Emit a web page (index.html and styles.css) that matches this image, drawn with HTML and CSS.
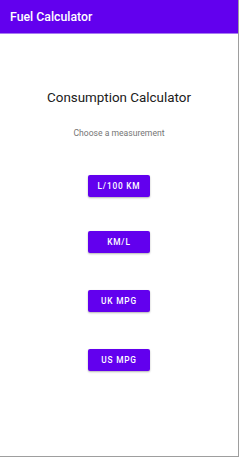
FILE: index.html
```html
<!DOCTYPE html>
<html>

<head>
    <title>Fuel Calculator</title>
    <link rel="stylesheet" href="styles.css">
</head>

<body>
    <div class="screen">
        <div class="app-bar">
            <span class="app-title">Fuel Calculator</span>
            <span class="status-edge"></span>
        </div>

        <div class="content">
            <h1 class="main-title">Consumption Calculator</h1>
            <p class="sub-title">Choose a measurement</p>

            <div class="btn-list">
                <div class="btn">L/100 km</div>
                <div class="btn btn-kml">km/l</div>
                <div class="btn btn-uk">UK mpg</div>
                <div class="btn btn-us">US mpg</div>
            </div>
        </div>
    </div>
</body>

</html>
```

FILE: styles.css
```css
body {
    margin: 0;
    font-family: Roboto, "Liberation Sans", sans-serif;
    background: white;
}

.screen {
    position: relative;
    box-sizing: border-box;
    width: 239px;
    height: 457px;
    border-right: 1px solid #9e9e9e;
    border-bottom: 1px solid #9e9e9e;
    overflow: hidden;
}

.app-bar {
    display: flex;
    align-items: center;
    height: 33px;
    padding-left: 10px;
    background-color: #6200ee;
    box-shadow: 0 1px 0 #a77bf0;
}

.app-title {
    color: white;
    font-size: 12.3px;
    font-weight: 500;
}

/* bout de barre de statut visible sur le bord droit */
.status-edge {
    position: absolute;
    top: 0;
    right: -1px;
    width: 1px;
    height: 13px;
    background-color: #3700b3;
}

.content {
    display: flex;
    flex-direction: column;
    align-items: center;
}

.main-title {
    margin: 56px 0 0 0;
    font-size: 13.4px;
    line-height: 17px;
    font-weight: 400;
    color: #202020;
}

.sub-title {
    margin: 21px 0 0 0;
    font-size: 8.6px;
    line-height: 12px;
    color: #757575;
}

.btn-list {
    display: flex;
    flex-direction: column;
    align-items: center;
    margin-top: 36px;
}

.btn {
    display: flex;
    align-items: center;
    justify-content: center;
    height: 22px;
    min-width: 62px;
    padding: 0 10px;
    box-sizing: border-box;
    border-radius: 2px;
    background-color: #6200ee;
    box-shadow: 0 1px 2px rgba(0, 0, 0, 0.3);
    color: white;
    font-size: 8.3px;
    font-weight: 500;
    letter-spacing: 0.8px;
    text-transform: uppercase;
}

.btn-kml {
    margin-top: 34px;
}

.btn-uk {
    margin-top: 37px;
}

.btn-us {
    margin-top: 37px;
}
```
